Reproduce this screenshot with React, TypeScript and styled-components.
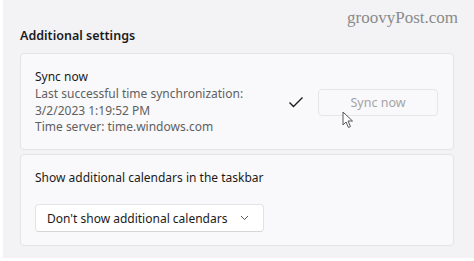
import React from 'react';
import styled, { createGlobalStyle } from 'styled-components';

const Global = createGlobalStyle`
	html, body {
		margin: 0;
		padding: 0;
		background: #ffffff;
		font-family: 'Noto Sans', 'Open Sans', sans-serif;
	}
`;

const Window = styled.div`
	margin-left: 3px;
	width: 471px;
	height: 258px;
	background: #f3f3f6;
	box-sizing: border-box;
	padding: 8px 20px 0 17px;
	display: flex;
	flex-direction: column;
`;

const Watermark = styled.div`
	align-self: flex-end;
	margin-right: -4px;
	font-family: 'Liberation Serif', serif;
	font-size: 17px;
	color: #8a8a8a;
	line-height: 20px;
`;

const Heading = styled.h2`
	margin: -1px 0 8px 0;
	font-size: 12.5px;
	font-weight: 600;
	color: #1b1b1b;
	line-height: 18px;
`;

const Card = styled.div<{ $gap: number }>`
	background: #f9f9fb;
	border: 1px solid #e4e4e7;
	border-radius: 4px;
	padding: 14px 15px 13px 14px;
	margin-bottom: ${(p) => p.$gap}px;
	display: flex;
	align-items: center;
`;

const Col = styled.div`
	flex: 1;
	display: flex;
	flex-direction: column;
`;

const Title = styled.div`
	font-size: 12px;
	color: #1b1b1b;
	line-height: 18px;
`;

const Sub = styled.div`
	font-size: 12px;
	color: #606060;
	line-height: 16.7px;
`;

const Check = styled.svg`
	width: 16px;
	height: 16px;
	margin-right: 14px;
`;

const Button = styled.button`
	position: relative;
	width: 120px;
	height: 27px;
	border: 1px solid #e6e6e8;
	border-radius: 4px;
	background: #f9f9fb;
	color: #a3a3a6;
	font-family: inherit;
	font-size: 12.5px;
	padding: 0;
`;

const Cursor = styled.svg`
	position: absolute;
	left: 23px;
	top: 21px;
	width: 12px;
	height: 18px;
`;

const Select = styled.div`
	margin-top: 17px;
	align-self: flex-start;
	width: 229px;
	height: 28px;
	box-sizing: border-box;
	background: #ffffff;
	border: 1px solid #e3e3e6;
	border-bottom-color: #d6d6d9;
	border-radius: 4px;
	padding: 0 14px 0 11px;
	display: flex;
	align-items: center;
	justify-content: space-between;
	font-size: 12px;
	color: #1b1b1b;
`;

export default function App() {
	return (
		<>
			<Global />
			<Window>
				<Watermark>groovyPost.com</Watermark>
				<Heading>Additional settings</Heading>
				<Card $gap={4}>
					<Col>
						<Title>Sync now</Title>
						<Sub>Last successful time synchronization:</Sub>
						<Sub>3/2/2023 1:19:52 PM</Sub>
						<Sub>Time server: time.windows.com</Sub>
					</Col>
					<Check viewBox="0 0 16 16">
						<path d="M1.5 8.5 L5.5 12.5 L14.5 3.5" fill="none" stroke="#1b1b1b" strokeWidth="1.4" />
					</Check>
					<Button disabled>
						Sync now
						<Cursor viewBox="0 0 12 18">
							<path d="M1 1 L1 14 L4 11 L6.5 16.5 L8.5 15.5 L6 10 L10.5 10 Z" fill="#ffffff" stroke="#555" strokeWidth="1" strokeLinejoin="round" />
						</Cursor>
					</Button>
				</Card>
				<Card $gap={0}>
					<Col>
						<Title>Show additional calendars in the taskbar</Title>
						<Select>
							<span>Don't show additional calendars</span>
							<svg width="9" height="6" viewBox="0 0 9 6">
								<path d="M1 1 L4.5 4.5 L8 1" fill="none" stroke="#555" strokeWidth="1" />
							</svg>
						</Select>
					</Col>
				</Card>
			</Window>
		</>
	);
}
